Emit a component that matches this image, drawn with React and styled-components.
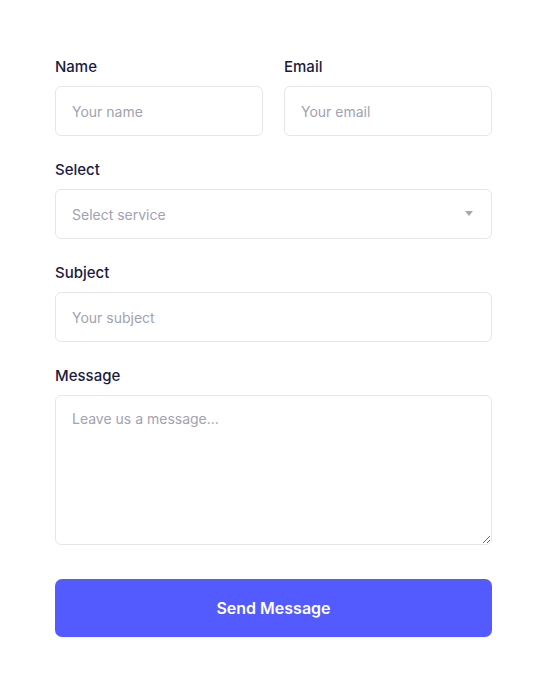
import React from 'react'
import styled, { createGlobalStyle } from 'styled-components'

const Global = createGlobalStyle`
  body {
    margin: 0;
    background: #ffffff;
    font-family: Inter, "Noto Sans", sans-serif;
  }
  * { box-sizing: border-box; }
`
const Form = styled.form`
  width: 437px;
  margin: 0 0 0 55px;
  padding: 56px 0 0 0;
  display: flex;
  flex-direction: column;
  gap: 23px;
`
const Row = styled.div`
  display: grid;
  grid-template-columns: 1fr 1fr;
  gap: 21px;
`
const Field = styled.div`
  display: flex;
  flex-direction: column;
  position: relative;
`
const Label = styled.label`
  font-size: 15px;
  font-weight: 500;
  line-height: 22px;
  color: #1a1b40;
  margin-bottom: 8px;
`
const inputStyles = `
  width: 100%;
  border: 1px solid #e6e6ea;
  border-radius: 6px;
  background: #fff;
  font-family: Inter, "Noto Sans", sans-serif;
  font-size: 14px;
  color: #14163a;
  padding: 0 16px;
  outline: none;
  &::placeholder { color: #a2a2b0; }
`
const Input = styled.input`
  ${inputStyles}
  height: 50px;
`
const SelectWrap = styled.div`
  position: relative;
`
const Select = styled.select`
  ${inputStyles}
  height: 50px;
  appearance: none;
  color: ${(p) => (p.$empty ? '#a2a2b0' : '#14163a')};
`
const Caret = styled.span`
  position: absolute;
  right: 19px;
  top: 22px;
  width: 0;
  height: 0;
  border-left: 4px solid transparent;
  border-right: 4px solid transparent;
  border-top: 5px solid #a8a8ac;
  pointer-events: none;
`
const TextArea = styled.textarea`
  ${inputStyles}
  height: 150px;
  padding: 14px 16px;
  resize: vertical;
  display: block;
`
const Button = styled.button`
  margin-top: 11px;
  height: 58px;
  border: none;
  border-radius: 7px;
  background: #545bfe;
  color: #fff;
  font-family: Inter, "Noto Sans", sans-serif;
  font-size: 16px;
  font-weight: 600;
  cursor: pointer;
`

export default function App() {
  return (
    <>
      <Global />
      <Form onSubmit={(e) => e.preventDefault()}>
        <Row>
          <Field>
            <Label>Name</Label>
            <Input placeholder="Your name" />
          </Field>
          <Field>
            <Label>Email</Label>
            <Input placeholder="Your email" />
          </Field>
        </Row>
        <Field>
          <Label>Select</Label>
          <SelectWrap>
            <Select $empty defaultValue="">
              <option value="" disabled>Select service</option>
              <option>Design</option>
              <option>Development</option>
            </Select>
            <Caret />
          </SelectWrap>
        </Field>
        <Field>
          <Label>Subject</Label>
          <Input placeholder="Your subject" />
        </Field>
        <Field>
          <Label>Message</Label>
          <TextArea placeholder="Leave us a message..." />
        </Field>
        <Button type="submit">Send Message</Button>
      </Form>
    </>
  )
}
